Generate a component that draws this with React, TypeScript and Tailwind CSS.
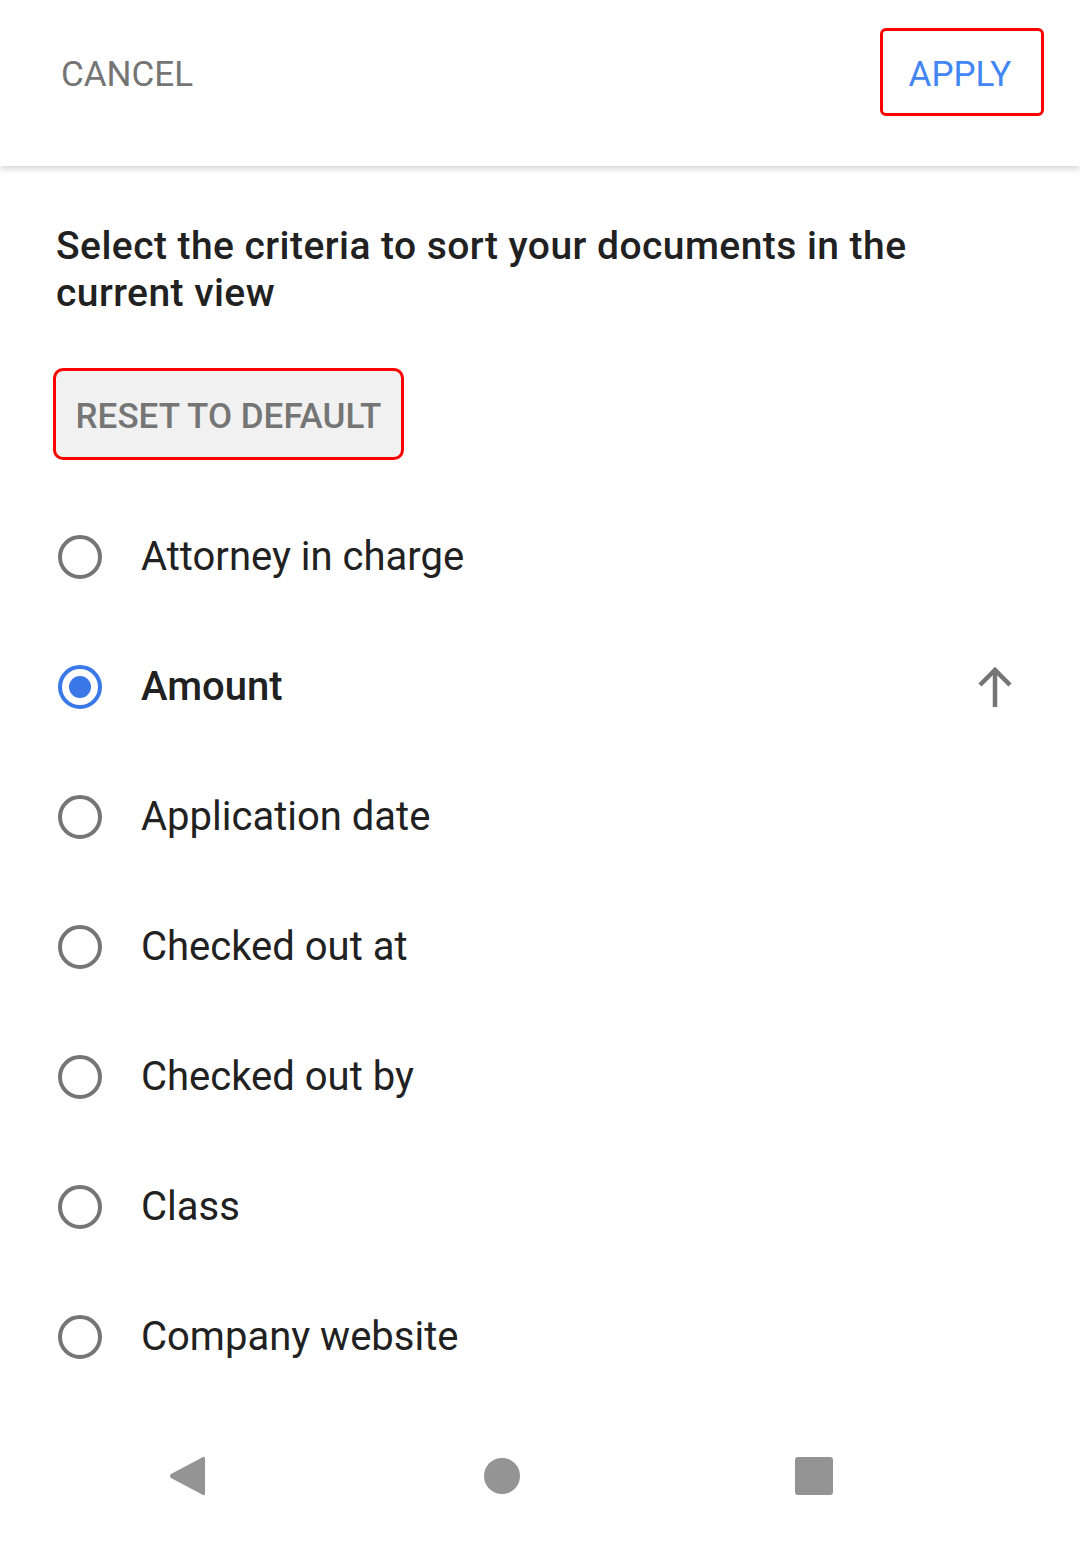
const options = [
  'Attorney in charge',
  'Amount',
  'Application date',
  'Checked out at',
  'Checked out by',
  'Class',
  'Company website',
];

function Radio({ checked }: { checked: boolean }) {
  if (checked) {
    return (
      <div className="w-[44px] h-[44px] rounded-full border-[4px] border-[#3b78e7] flex items-center justify-center">
        <div className="w-[22px] h-[22px] rounded-full bg-[#3b78e7]" />
      </div>
    );
  }
  return <div className="w-[44px] h-[44px] rounded-full border-[4px] border-[#757575]" />;
}

export default function App() {
  const selected = 'Amount';

  return (
    <div className="w-[1080px] h-[1551px] bg-white flex flex-col font-['Roboto',sans-serif] overflow-hidden">
      {/* top bar */}
      <div className="h-[166px] flex items-start justify-between pl-[61px] pr-[36px] shadow-[0_3px_6px_rgba(0,0,0,0.16)] relative z-10 bg-white">
        <span className="mt-[54px] text-[35px] leading-[42px] text-[#757575]">CANCEL</span>
        <div className="mt-[28px] w-[164px] h-[88px] border-[3px] border-[#ff0000] rounded-[6px] flex items-center justify-center">
          <span className="text-[35px] leading-[42px] text-[#4285f4] mt-[6px] mr-[4px]">APPLY</span>
        </div>
      </div>

      <div className="px-[56px] pt-[57px]">
        <h1 className="text-[39px] leading-[47px] font-medium tracking-[0.45px] text-[#212121]">
          Select the criteria to sort your documents in the current view
        </h1>

        <button className="mt-[51px] w-[351px] h-[92px] pt-[7px] bg-[#f1f1f1] border-[3px] border-[#ff0000] rounded-[10px] flex items-center justify-center -ml-[3px]">
          <span className="text-[35px] text-[#757575] font-medium">RESET TO DEFAULT</span>
        </button>
      </div>

      <div className="mt-[32px] flex flex-col">
        {options.map((o) => (
          <div key={o} className="h-[130px] flex items-center pl-[58px] pr-[65px]">
            <Radio checked={o === selected} />
            <span
              className={
                'ml-[39px] text-[40px] text-[#212121] flex-1 ' + (o === selected ? 'font-medium' : '')
              }
            >
              {o}
            </span>
            {o === selected && (
              <svg width="40" height="42" viewBox="0 0 40 42" fill="none" stroke="#757575" strokeWidth="4.5">
                <path d="M20 41 V4" />
                <path d="M5 19 L20 4 L35 19" />
              </svg>
            )}
          </div>
        ))}
      </div>

      {/* android nav bar */}
      <div className="flex-1 flex items-center pb-[2px]">
        <svg className="ml-[168px]" width="38" height="42" viewBox="0 0 38 42">
          <path d="M35 2 Q37 1 37 4 V38 Q37 41 35 40 L3 23 Q1 21 3 19 Z" fill="#949494" />
        </svg>
        <div className="ml-[278px] w-[36px] h-[36px] rounded-full bg-[#949494]" />
        <div className="ml-[275px] w-[38px] h-[38px] rounded-[3px] bg-[#949494]" />
      </div>
    </div>
  );
}
